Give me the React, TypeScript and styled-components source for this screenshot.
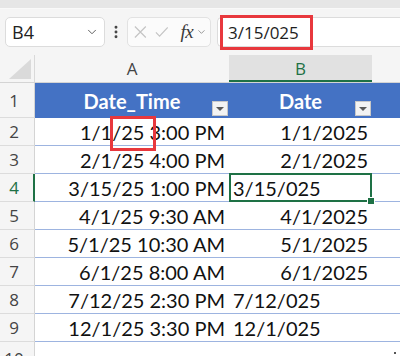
import React from "react";
import styled, { createGlobalStyle } from "styled-components";
import { ChevronDown, EllipsisVertical } from "lucide-react";

const GlobalStyle = createGlobalStyle`
  html, body {
    margin: 0;
    padding: 0;
    background: #ffffff;
    overflow: hidden;
  }
  #root {
    width: 400px;
    height: 356px;
    overflow: hidden;
  }
`;

type Row = {
  n: number;
  a: string;
  b: string;
  text?: boolean;
  selected?: boolean;
  mark?: boolean;
};

const rows: Row[] = [
  { n: 2, a: "1/1/25 3:00 PM", b: "1/1/2025", mark: true },
  { n: 3, a: "2/1/25 4:00 PM", b: "2/1/2025" },
  { n: 4, a: "3/15/25 1:00 PM", b: "3/15/025", text: true, selected: true },
  { n: 5, a: "4/1/25 9:30 AM", b: "4/1/2025" },
  { n: 6, a: "5/1/25 10:30 AM", b: "5/1/2025" },
  { n: 7, a: "6/1/25 8:00 AM", b: "6/1/2025" },
  { n: 8, a: "7/12/25 2:30 PM", b: "7/12/025", text: true },
  { n: 9, a: "12/1/25 3:30 PM", b: "12/1/025", text: true },
];

function CancelIcon() {
  return (
    <svg width="14" height="14" viewBox="0 0 14 14">
      <path d="M1 1 L13 13 M13 1 L1 13" stroke="#c4c4c4" strokeWidth="1.3" fill="none" />
    </svg>
  );
}

function EnterIcon() {
  return (
    <svg width="15" height="12" viewBox="0 0 15 12">
      <path d="M1 6.5 L5 10.5 L14 1" stroke="#c4c4c4" strokeWidth="1.3" fill="none" />
    </svg>
  );
}

export default function App() {
  return (
    <>
      <GlobalStyle />
      <Sheet>
        <TitleStrip />
        <FormulaBar>
          <NameBox>
            <span>B4</span>
            <ChevronDown size={14} color="#555" strokeWidth={1.6} />
          </NameBox>
          <Dots>
            <EllipsisVertical size={16} color="#444" strokeWidth={2.4} />
          </Dots>
          <FxButtons>
            <CancelIcon />
            <EnterIcon />
            <Fx>fx</Fx>
            <ChevronDown size={12} color="#777" strokeWidth={1.6} />
          </FxButtons>
          <FormulaInput>
            <span>3/15/025</span>
            <RedBox />
          </FormulaInput>
        </FormulaBar>

        <ColumnHeads>
          <Corner>
            <CornerTriangle />
          </Corner>
          <ColHead width={194}>A</ColHead>
          <ColHead width={143} active>
            B
          </ColHead>
          <ColHead width={28} />
        </ColumnHeads>

        <GridRow>
          <RowHead height={35}>1</RowHead>
          <HeadCell width={194}>
            Date_Time
            <FilterButton />
          </HeadCell>
          <HeadCell width={143}>
            Date
            <FilterButton />
          </HeadCell>
          <HeadCell width={28} />
        </GridRow>

        {rows.map((r) => (
          <GridRow key={r.n}>
            <RowHead height={28} active={r.selected}>
              {r.n}
            </RowHead>
            <Cell width={194}>
              {r.a}
              {r.mark && <MarkBox />}
            </Cell>
            <Cell width={143} left={r.text} selected={r.selected}>
              {r.b}
              {r.selected && <FillHandle />}
            </Cell>
            <Cell width={28} />
          </GridRow>
        ))}

        <GridRow>
          <RowHead height={28} last>
            10
          </RowHead>
          <Cell width={194} last />
          <Cell width={143} last />
          <Cell width={28} last>
            <ResizeDot />
          </Cell>
        </GridRow>
      </Sheet>
    </>
  );
}

const Sheet = styled.div`
  width: 400px;
  height: 356px;
  overflow: hidden;
  display: flex;
  flex-direction: column;
  background: #ffffff;
`;

const TitleStrip = styled.div`
  height: 8px;
  flex-shrink: 0;
  background: #e6e6e6;
  border-bottom: 1px solid #f9f9f9;
`;

const FormulaBar = styled.div`
  height: 46px;
  flex-shrink: 0;
  background: #f5f5f5;
  display: flex;
  align-items: flex-start;
  padding: 8px 0 0 5px;
  box-sizing: border-box;
`;

const NameBox = styled.div`
  width: 100px;
  height: 30px;
  box-sizing: border-box;
  background: #ffffff;
  border: 1px solid #dcdcdc;
  border-radius: 5px;
  display: flex;
  align-items: center;
  justify-content: space-between;
  padding: 0 5px 0 6px;
  font-family: "Open Sans", "Noto Sans", sans-serif;
  font-size: 18px;
  color: #222;
`;

const Dots = styled.div`
  width: 22px;
  height: 30px;
  display: flex;
  align-items: center;
  justify-content: center;
`;

const FxButtons = styled.div`
  width: 84px;
  height: 30px;
  box-sizing: border-box;
  background: #fbfbfb;
  border: 1px solid #e2e2e2;
  border-radius: 5px;
  display: flex;
  align-items: center;
  padding: 0 3px 0 6px;
  gap: 8px;
`;

const Fx = styled.span`
  font-family: "Liberation Serif", serif;
  font-style: italic;
  font-size: 19px;
  color: #3a3a3a;
  margin-left: 4px;
  margin-right: -5px;
  letter-spacing: -0.5px;
`;

const FormulaInput = styled.div`
  position: relative;
  margin-left: 6px;
  flex: 1;
  height: 30px;
  box-sizing: border-box;
  background: #ffffff;
  border: 1px solid #dcdcdc;
  border-right: none;
  border-radius: 5px 0 0 5px;
  display: flex;
  align-items: center;
  padding-left: 10px;
  font-family: "Open Sans", "Noto Sans", sans-serif;
  font-size: 17px;
  color: #1e1e1e;
`;

const RedBox = styled.div`
  position: absolute;
  left: 2px;
  top: -3px;
  width: 93px;
  height: 35px;
  box-sizing: border-box;
  border: 3px solid #e8383d;
`;

const ColumnHeads = styled.div`
  display: flex;
  height: 28px;
  flex-shrink: 0;
  background: #f5f5f5;
  border-bottom: 1px solid #d4d4d4;
  box-sizing: border-box;
`;

const Corner = styled.div`
  width: 35px;
  position: relative;
  border-right: 1px solid #d9d9d9;
  box-sizing: border-box;
`;

const CornerTriangle = styled.div`
  position: absolute;
  right: 3px;
  bottom: 3px;
  width: 0;
  height: 0;
  border-left: 22px solid transparent;
  border-bottom: 20px solid #dadada;
`;

const ColHead = styled.div<{ width: number; active?: boolean }>`
  width: ${(p) => p.width}px;
  flex-shrink: 0;
  box-sizing: border-box;
  display: flex;
  align-items: center;
  justify-content: center;
  font-family: "Open Sans", "Noto Sans", sans-serif;
  font-size: 17px;
  color: ${(p) => (p.active ? "#1e7145" : "#444")};
  background: ${(p) => (p.active ? "#e1e1e1" : "transparent")};
  border-bottom: ${(p) => (p.active ? "2px solid #1e7145" : "none")};
  padding-top: ${(p) => (p.active ? "2px" : "0")};
`;

const GridRow = styled.div`
  display: flex;
  flex-shrink: 0;
`;

const RowHead = styled.div<{ height: number; active?: boolean; last?: boolean }>`
  width: 35px;
  height: ${(p) => p.height}px;
  flex-shrink: 0;
  box-sizing: border-box;
  background: #f5f5f5;
  border-right: ${(p) => (p.active ? "2px solid #1e7145" : "1px solid #d4d4d4")};
  border-bottom: 1px solid #dcdcdc;
  display: flex;
  align-items: ${(p) => (p.last ? "flex-start" : "center")};
  justify-content: center;
  padding-right: ${(p) => (p.active ? "5px" : "6px")};
  padding-top: ${(p) => (p.last ? "5px" : "0")};
  font-family: "Open Sans", "Noto Sans", sans-serif;
  font-size: 17px;
  color: ${(p) => (p.active ? "#1e7145" : "#444")};
`;

const HeadCell = styled.div<{ width: number }>`
  position: relative;
  width: ${(p) => p.width}px;
  height: 35px;
  flex-shrink: 0;
  box-sizing: border-box;
  background: #4472c4;
  display: flex;
  align-items: center;
  justify-content: center;
  font-family: "Lato", "Open Sans", sans-serif;
  font-weight: 700;
  font-size: 20px;
  color: #ffffff;
`;

const FilterButton = styled.div`
  position: absolute;
  right: 1px;
  bottom: 2px;
  width: 16px;
  height: 15px;
  box-sizing: border-box;
  background: #f3f3f3;
  border: 1px solid #c8c8c8;
  display: flex;
  align-items: center;
  justify-content: center;
  &::after {
    content: "";
    width: 0;
    height: 0;
    border-left: 4px solid transparent;
    border-right: 4px solid transparent;
    border-top: 4px solid #5a5a5a;
    margin-top: 1px;
  }
`;

const Cell = styled.div<{
  width: number;
  left?: boolean;
  selected?: boolean;
  last?: boolean;
}>`
  position: relative;
  width: ${(p) => p.width}px;
  height: 28px;
  flex-shrink: 0;
  box-sizing: border-box;
  border-bottom: ${(p) => (p.last ? "none" : "1px solid #9db4e0")};
  display: flex;
  align-items: center;
  justify-content: ${(p) => (p.left ? "flex-start" : "flex-end")};
  padding: ${(p) => (p.left ? "1px 0 0 4px" : "1px 4px 0 0")};
  font-family: "Lato", "Open Sans", sans-serif;
  font-size: 20px;
  color: #111;
  white-space: nowrap;
  ${(p) =>
    p.selected &&
    `
    &::before {
      content: "";
      position: absolute;
      left: 0;
      top: -1px;
      right: 0;
      bottom: -1px;
      border: 2px solid #1e7145;
    }
  `}
`;

const FillHandle = styled.div`
  position: absolute;
  right: -3px;
  bottom: -4px;
  width: 6px;
  height: 6px;
  background: #1e7145;
  border: 1px solid #ffffff;
  z-index: 1;
`;

const MarkBox = styled.div`
  position: absolute;
  left: 75px;
  top: -2px;
  width: 46px;
  height: 35px;
  box-sizing: border-box;
  border: 3px solid #e8383d;
  z-index: 1;
`;

const ResizeDot = styled.div`
  position: absolute;
  right: 4px;
  top: 10px;
  width: 2px;
  height: 2px;
  background: #555;
`;
